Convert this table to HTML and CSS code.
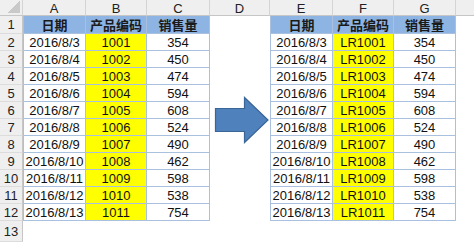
FILE: index.html
```html
<!DOCTYPE html>
<html lang="zh-CN">
<head>
<meta charset="utf-8">
<title>Sheet</title>
<link rel="stylesheet" href="styles.css">
</head>
<body>
<div class="sheet">
  <div class="ch corner"><span class="tri"></span></div>
  <div class="ch">A</div><div class="ch">B</div><div class="ch">C</div><div class="ch">D</div><div class="ch">E</div><div class="ch">F</div><div class="ch">G</div><div class="ch last"></div>

  <div class="rh">1</div>
  <div class="th first">日期</div><div class="th">产品编码</div><div class="th">销售量</div><div class="e"></div>
  <div class="th first">日期</div><div class="th">产品编码</div><div class="th">销售量</div><div class="e"></div>

  <div class="rh">2</div>
  <div class="d first">2016/8/3</div><div class="d y">1001</div><div class="d">354</div><div class="e"></div>
  <div class="d first">2016/8/3</div><div class="d y">LR1001</div><div class="d">354</div><div class="e"></div>

  <div class="rh">3</div>
  <div class="d first">2016/8/4</div><div class="d y">1002</div><div class="d">450</div><div class="e"></div>
  <div class="d first">2016/8/4</div><div class="d y">LR1002</div><div class="d">450</div><div class="e"></div>

  <div class="rh">4</div>
  <div class="d first">2016/8/5</div><div class="d y">1003</div><div class="d">474</div><div class="e"></div>
  <div class="d first">2016/8/5</div><div class="d y">LR1003</div><div class="d">474</div><div class="e"></div>

  <div class="rh">5</div>
  <div class="d first">2016/8/6</div><div class="d y">1004</div><div class="d">594</div><div class="e"></div>
  <div class="d first">2016/8/6</div><div class="d y">LR1004</div><div class="d">594</div><div class="e"></div>

  <div class="rh">6</div>
  <div class="d first">2016/8/7</div><div class="d y">1005</div><div class="d">608</div><div class="e"></div>
  <div class="d first">2016/8/7</div><div class="d y">LR1005</div><div class="d">608</div><div class="e"></div>

  <div class="rh">7</div>
  <div class="d first">2016/8/8</div><div class="d y">1006</div><div class="d">524</div><div class="e"></div>
  <div class="d first">2016/8/8</div><div class="d y">LR1006</div><div class="d">524</div><div class="e"></div>

  <div class="rh">8</div>
  <div class="d first">2016/8/9</div><div class="d y">1007</div><div class="d">490</div><div class="e"></div>
  <div class="d first">2016/8/9</div><div class="d y">LR1007</div><div class="d">490</div><div class="e"></div>

  <div class="rh">9</div>
  <div class="d first">2016/8/10</div><div class="d y">1008</div><div class="d">462</div><div class="e"></div>
  <div class="d first">2016/8/10</div><div class="d y">LR1008</div><div class="d">462</div><div class="e"></div>

  <div class="rh">10</div>
  <div class="d first">2016/8/11</div><div class="d y">1009</div><div class="d">598</div><div class="e"></div>
  <div class="d first">2016/8/11</div><div class="d y">LR1009</div><div class="d">598</div><div class="e"></div>

  <div class="rh">11</div>
  <div class="d first">2016/8/12</div><div class="d y">1010</div><div class="d">538</div><div class="e"></div>
  <div class="d first">2016/8/12</div><div class="d y">LR1010</div><div class="d">538</div><div class="e"></div>

  <div class="rh">12</div>
  <div class="d first">2016/8/13</div><div class="d y">1011</div><div class="d">754</div><div class="e"></div>
  <div class="d first">2016/8/13</div><div class="d y">LR1011</div><div class="d">754</div><div class="e"></div>

  <div class="rh">13</div>
  <div class="e"></div><div class="e"></div><div class="e"></div><div class="e"></div><div class="e"></div><div class="e"></div><div class="e"></div><div class="e"></div>

  <svg class="arrow" width="56" height="50" viewBox="0 0 56 50" aria-hidden="true">
    <path d="M1.5 12.5 H30.5 V1.5 L54 24 L30.5 46.5 V35.5 H1.5 Z" fill="#4f81bd" stroke="#3a6597" stroke-width="1.2"/>
  </svg>
</div>
</body>
</html>
```

FILE: styles.css
```css
html, body {
  margin: 0;
  padding: 0;
  background: #ffffff;
}

.sheet {
  position: relative;
  width: 474px;
  height: 242px;
  overflow: hidden;
  display: grid;
  grid-template-columns: 23px 63px 61px 63px 60px 63px 61px 62px 1fr;
  grid-template-rows: 16px 18px repeat(11, 17px) 1fr;
  font-family: "Liberation Sans", "Noto Sans CJK SC", sans-serif;
  font-size: 13px;
  color: #111;
}

.sheet > div {
  box-sizing: border-box;
  display: flex;
  align-items: center;
  justify-content: center;
  white-space: nowrap;
}

.ch {
  background: #efefef;
  border-right: 1px solid #d4d4d4;
  border-bottom: 1px solid #c6c6c6;
  color: #222;
  padding-top: 1px;
}

.ch.last {
  border-right: none;
}

.corner {
  justify-content: flex-end !important;
  align-items: flex-end !important;
  padding: 0 2px 2px 0;
}

.tri {
  width: 12px;
  height: 12px;
  background: linear-gradient(to bottom right, transparent 50%, #c9c9c9 50%);
}

.rh {
  background: #efefef;
  border-right: 1px solid #c6c6c6;
  border-bottom: 1px solid #dcdcdc;
  color: #222;
}

.th {
  background: #8db4e2;
  font-family: "Noto Sans CJK SC", "Liberation Sans", sans-serif;
  font-weight: bold;
  font-size: 13px;
  color: #1a1a1a;
  border-right: 1px solid #a9c1de;
  border-bottom: 1px solid #a9c1de;
}

.d {
  background: #ffffff;
  border-right: 1px solid #a9c1de;
  border-bottom: 1px solid #a9c1de;
}

.first {
  border-left: 1px solid #a9c1de;
}

.y {
  background: #ffff00;
}

.e {
  background: #ffffff;
}

.arrow {
  position: absolute;
  left: 214px;
  top: 96px;
}
```
